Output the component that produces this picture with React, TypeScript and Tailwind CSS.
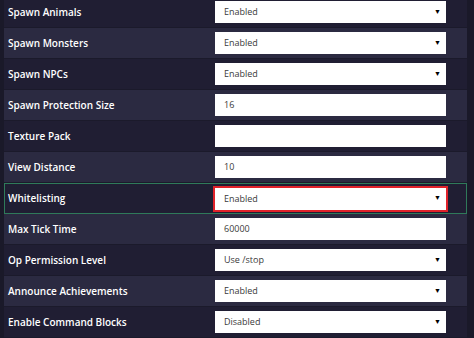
import React from 'react';

type Row = {
    label: string;
    value: string;
    kind: 'select' | 'input';
};

const rows: Row[] = [
    { label: 'Spawn Animals', value: 'Enabled', kind: 'select' },
    { label: 'Spawn Monsters', value: 'Enabled', kind: 'select' },
    { label: 'Spawn NPCs', value: 'Enabled', kind: 'select' },
    { label: 'Spawn Protection Size', value: '16', kind: 'input' },
    { label: 'Texture Pack', value: '', kind: 'input' },
    { label: 'View Distance', value: '10', kind: 'input' },
    { label: 'Whitelisting', value: 'Enabled', kind: 'select' },
    { label: 'Max Tick Time', value: '60000', kind: 'input' },
    { label: 'Op Permission Level', value: 'Use /stop', kind: 'select' },
    { label: 'Announce Achievements', value: 'Enabled', kind: 'select' },
    { label: 'Enable Command Blocks', value: 'Disabled', kind: 'select' },
];

export default function App() {
    return (
        <div className="w-[474px] h-[338px] overflow-hidden bg-[#1a1929] flex" style={{ fontFamily: '"Open Sans", Lato, sans-serif' }}>
            <div className="ml-[4px] w-[463px] -mt-[3px] flex flex-col">
                {rows.map((row, i) => {
                    const focused = row.label === 'Whitelisting';
                    return (
                        <div
                            key={row.label}
                            className={
                                'h-[31px] shrink-0 flex items-center ' +
                                (i % 2 === 0 ? 'bg-[#201e33] ' : 'bg-[#2b2a41] ') +
                                (focused ? 'border border-[#2f7a5a]' : 'border-b border-[#1b1a2b]')
                            }
                        >
                            <div className={'w-[211px] text-[10px] font-semibold text-white ' + (focused ? 'pl-[3px]' : 'pl-[4px]')}>
                                {row.label}
                            </div>
                            <div
                                className={
                                    'w-[231px] h-[22px] bg-white flex items-center pl-[9px] pr-[5px] text-[9px] text-[#3a3a3a] ' +
                                    (focused ? 'outline-2 outline-[#e0222a] -ml-[1px]' : '')
                                }
                            >
                                <span className="flex-1">{row.value}</span>
                                {row.kind === 'select' && <span className="text-[7px] text-black">▼</span>}
                            </div>
                        </div>
                    );
                })}
            </div>
        </div>
    );
}
